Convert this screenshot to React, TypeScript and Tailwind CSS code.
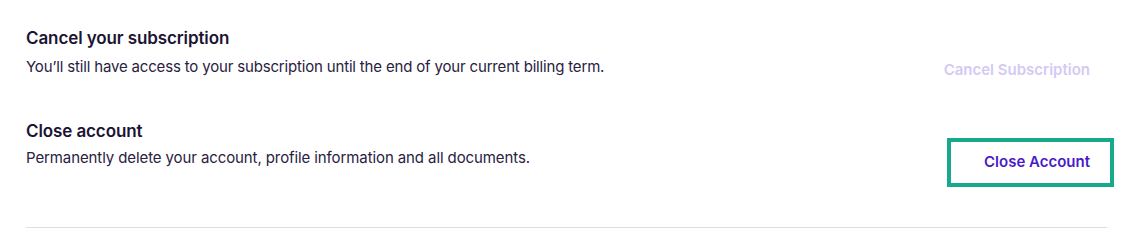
export default function App() {
  return (
    <div
      className="min-h-[250px] bg-white pl-[26px] pt-[27px] text-[#1c1433]"
      style={{ fontFamily: "Inter, 'Noto Sans', sans-serif" }}
    >
      <div className="mr-[16px]">
        <div className="flex items-start justify-between">
          <div>
            <h3 className="text-[17px] font-semibold leading-[22px] tracking-[-0.1px]">Cancel your subscription</h3>
            <p className="mt-[7px] text-[15px] leading-[22px] tracking-[-0.17px] text-[#2a2140]">
              You’ll still have access to your subscription until the end of your current billing term.
            </p>
          </div>
          <button
            className="mt-[23px] h-[40px] px-5 text-[15px] font-semibold text-[#d5c9f4]"
            disabled
          >
            Cancel Subscription
          </button>
        </div>

        <div className="mt-[30px] flex items-start justify-between">
          <div>
            <h3 className="text-[17px] font-semibold leading-[22px] tracking-[-0.1px]">Close account</h3>
            <p className="mt-[5px] text-[15px] leading-[22px] tracking-[-0.1px] text-[#2a2140]">
              Permanently delete your account, profile information and all documents.
            </p>
          </div>
          <button className="mt-[22px] h-[41px] pl-[33px] pr-[20px] text-[15px] font-semibold text-[#4a1bc8] outline-4 outline-[#17a98b]">
            Close Account
          </button>
        </div>
      </div>
      <div className="mr-[19px] mt-[44px] border-t border-[#dedede]" />
    </div>
  );
}
